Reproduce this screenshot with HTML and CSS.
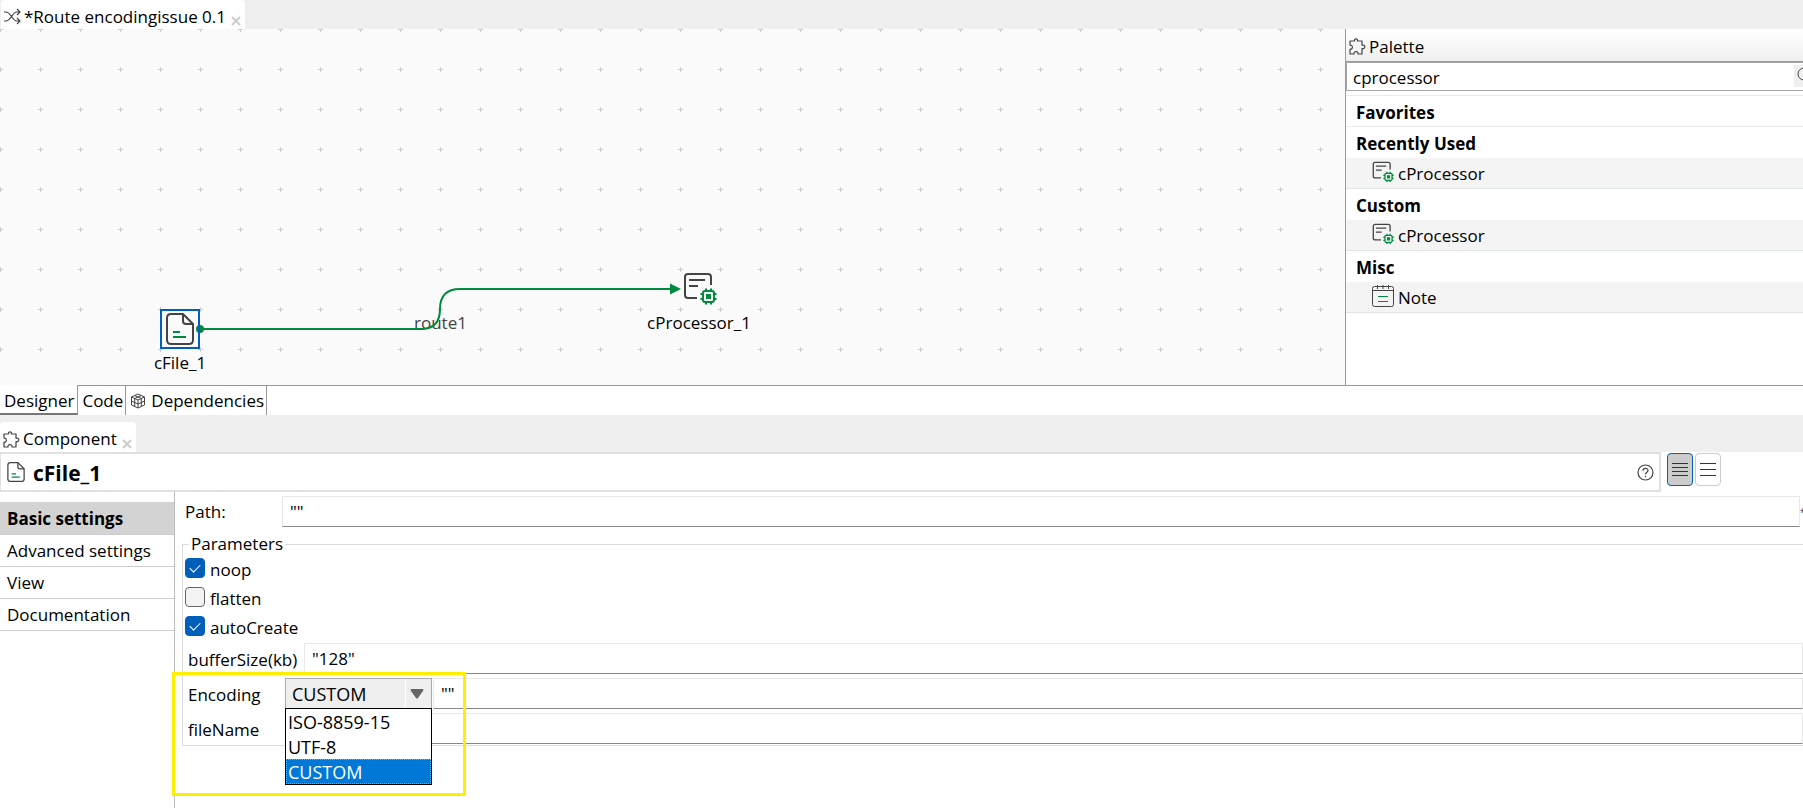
FILE: index.html
```html
<!doctype html>
<html lang="en">
<head>
<title>Route encodingissue 0.1</title>
<meta charset="UTF-8">
<meta name="viewport" content="width=device-width, initial-scale=1.0">
<link rel="stylesheet" href="styles.css">
</head>
<body>

  <!-- shared icons -->
  <svg class="defs" width="0" height="0">
    <symbol id="puzzle" viewBox="0 0 17 17">
      <path d="M1 3H5.6C4.6 .2 9.4 .2 8.4 3H13V7.2C16.8 6.2 16.8 11.3 13 10.5V16H9C9.6 12.8 4.4 12.8 5 16H1V11.2C4.2 11.8 4.2 6.6 1 7.2Z" fill="none" stroke="#444" stroke-width="1.2" stroke-linejoin="round"/>
    </symbol>
    <symbol id="processor" viewBox="0 0 34 34">
      <path d="M28 13V5Q28 2 25 2H5Q2 2 2 5V23Q2 26 5 26H14M6 8H22M6 14H15" fill="none" stroke="#444" stroke-width="2"/>
      <rect x="20" y="19" width="11" height="11" rx="2" fill="none" stroke="#008a3e" stroke-width="2"/>
      <rect x="23" y="22" width="5" height="5" fill="#008a3e"/>
      <path d="M23 19V16.500M28 19V16.500M23 32.500V30M28 32.500V30M17.500 22H20M17.500 27H20M31 22H33.500M31 27H33.500" stroke="#008a3e" stroke-width="2"/>
    </symbol>
    <symbol id="file" viewBox="0 0 28 32">
      <path d="M5 1H17L27 11V27Q27 31 23 31H5Q1 31 1 27V5Q1 1 5 1ZM17 1V8Q17 11 20 11H27" fill="none" stroke="#444" stroke-width="2"/>
      <path d="M7 19H14M7 24H20" stroke="#008a3e" stroke-width="2"/>
    </symbol>
  </svg>

  <div class="tabbar">
    <div class="tab">
      <svg class="icon" viewBox="0 0 17 17">
        <path d="M0 4H2C7 4 8 13 13 13H16M0 13H2C7 13 8 4 13 4H16M13 1L16 4L13 7M13 10L16 13L13 16" fill="none" stroke="#444" stroke-width="1.2"/>
      </svg>
      <span>*Route encodingissue 0.1</span>
      <button class="close" aria-label="Close editor"><svg viewBox="0 0 10 10"><path d="M1 1L9 9M9 1L1 9"/></svg></button>
    </div>
  </div>

  <main class="editor">
    <svg class="canvas">
      <defs>
        <pattern id="grid" x="-20" y="-20" width="40" height="40" patternUnits="userSpaceOnUse">
          <path d="M18 20.500H23M20.500 18V23" stroke="#ccc"/>
        </pattern>
      </defs>
      <rect width="100%" height="100%" fill="url(#grid)"/>

      <text class="route-label" x="414" y="300">route1</text>
      <circle cx="200" cy="300" r="4" fill="#008a3e"/>
      <path d="M200 300H421Q440 300 440 280Q440 260 460 260H672" fill="none" stroke="#008a3e" stroke-width="2"/>
      <path d="M670 254.500L681 260L670 265.500Z" fill="#008a3e"/>

      <use href="#file" x="166" y="284" width="28" height="32"/>
      <rect x="161" y="281" width="38" height="38" fill="none" stroke="#005fb8" stroke-width="2"/>
      <text class="node-label" x="180" y="340">cFile_1</text>

      <use href="#processor" x="683" y="243" width="34" height="34"/>
      <text class="node-label" x="699" y="300">cProcessor_1</text>
    </svg>

    <aside class="palette">
      <div class="palette-title">
        <svg class="icon"><use href="#puzzle"/></svg>
        <span>Palette</span>
      </div>
      <div class="search">
        <input type="text" value="cprocessor" aria-label="Search palette">
        <button aria-label="Search">
          <svg viewBox="0 0 18 18"><circle cx="8" cy="8" r="6"/><path d="M12 12L17 17"/></svg>
        </button>
      </div>
      <div class="drawers">
        <h3>Favorites</h3>
        <h3>Recently Used</h3>
        <button class="entry"><svg><use href="#processor"/></svg>cProcessor</button>
        <h3>Custom</h3>
        <button class="entry"><svg><use href="#processor"/></svg>cProcessor</button>
        <h3>Misc</h3>
        <button class="entry">
          <svg viewBox="0 0 22 22">
            <rect x=".5" y="1.500" width="21" height="20" rx="2" fill="none" stroke="#444"/>
            <path d="M1 5.500H21M5.500 0V4M11 0V4M16.500 0V4" stroke="#444"/>
            <path d="M6 11.500H16M6 16.500H16" stroke="#008a3e"/>
          </svg>Note
        </button>
      </div>
    </aside>
  </main>

  <nav class="pages">
    <button class="current">Designer</button>
    <button>Code</button>
    <button>
      <svg viewBox="0 0 16 16">
        <path d="M8 1L14.500 4V12L8 15L1.500 12V4ZM1.500 4L8 7L14.500 4M8 7V15M4.700 2.500L11.300 5.500V13.500M11.300 2.500L4.700 5.500V13.500M1.500 8L8 11L14.500 8" fill="none" stroke="#444"/>
      </svg>Dependencies
    </button>
  </nav>

  <div class="tabbar views">
    <div class="tab">
      <svg class="icon"><use href="#puzzle"/></svg>
      <span>Component</span>
      <button class="close" aria-label="Close view"><svg viewBox="0 0 10 10"><path d="M1 1L9 9M9 1L1 9"/></svg></button>
    </div>
  </div>

  <header class="component-head">
    <div class="title">
      <svg class="title-icon"><use href="#file"/></svg>
      <h2>cFile_1</h2>
      <button class="help" aria-label="Help">
        <svg viewBox="0 0 17 17">
          <circle cx="8.500" cy="8.500" r="7.500"/>
          <path d="M6 6.800C6 3.600 11 3.600 11 6.500C11 8.300 8.500 8.300 8.500 10.500M8.500 11.800V13.200"/>
        </svg>
      </button>
    </div>
    <div class="layout-buttons">
      <button class="pressed" aria-label="Compact layout"><svg viewBox="0 0 16 16"><path d="M0 1.500H16M0 5.500H16M0 9.500H16M0 13.500H16"/></svg></button>
      <button aria-label="Table layout"><svg viewBox="0 0 16 16"><path d="M0 1.500H16M0 7.500H16M0 13.500H16"/></svg></button>
    </div>
  </header>

  <section class="component">
    <nav class="sections">
      <button class="current">Basic settings</button>
      <button>Advanced settings</button>
      <button>View</button>
      <button>Documentation</button>
    </nav>

    <form class="settings">
      <div class="path">
        <label for="path">Path:</label>
        <input id="path" type="text" value='""'>
        <span class="required">*</span>
      </div>

      <fieldset>
        <legend>Parameters</legend>
        <div class="check"><input id="noop" type="checkbox" checked><label for="noop">noop</label></div>
        <div class="check"><input id="flatten" type="checkbox"><label for="flatten">flatten</label></div>
        <div class="check"><input id="autoCreate" type="checkbox" checked><label for="autoCreate">autoCreate</label></div>

        <div class="field buffer">
          <label for="bufferSize">bufferSize(kb)</label>
          <input id="bufferSize" type="text" value='"128"'>
        </div>

        <div class="field encoding">
          <label for="encoding">Encoding</label>
          <div class="combo">
            <select id="encoding">
              <option>ISO-8859-15</option>
              <option>UTF-8</option>
              <option selected>CUSTOM</option>
            </select>
            <svg class="arrow" viewBox="0 0 14 10"><path d="M1 0H13Q14 1 13 2L8 9Q7 10 6 9L1 2Q0 1 1 0Z" fill="#666"/></svg>
            <ul class="options" role="listbox" aria-label="Encoding">
              <li role="option">ISO-8859-15</li>
              <li role="option">UTF-8</li>
              <li role="option" aria-selected="true">CUSTOM</li>
            </ul>
          </div>
          <input type="text" value='""' aria-label="Custom encoding">
          <div class="highlight"></div>
        </div>

        <div class="field">
          <label for="fileName">fileName</label>
          <input id="fileName" type="text">
        </div>
      </fieldset>
    </form>
  </section>

</body>
</html>
```
FILE: styles.css
```css
* {
  box-sizing: border-box;
}

body {
  margin: 0;
  min-height: 100vh;
  display: flex;
  flex-direction: column;
  overflow: hidden;
  background: white;
  color: black;
  font: 17px/24px "Open Sans", "Noto Sans", sans-serif;
}

button, input, select {
  font: inherit;
  color: inherit;
  margin: 0;
  border: 0;
  border-radius: 0;
  outline: none;
}

button {
  padding: 0;
  background: none;
  cursor: pointer;
}

svg {
  flex: none;
}

.defs {
  position: absolute;
}

.icon {
  width: 17px;
  height: 17px;
}

/* tab strips */
.tabbar {
  display: flex;
  height: 29px;
  padding-left: 1px;
  background: #efefef;
}

.tab {
  display: flex;
  align-items: center;
  gap: 3px;
  padding: 4px 4px 0 3px;
  background: white;
  border-radius: 4px 4px 0 0;
}

.close {
  display: flex;
  align-self: flex-end;
  margin: 0 0 3px 2px;
}

.close svg {
  width: 10px;
  height: 10px;
  fill: none;
  stroke: #ccc;
  stroke-width: 2;
}

.tabbar.views {
  height: 37px;
  padding: 7px 0 0 0;
}

/* designer */
.editor {
  display: flex;
  border-bottom: 1px solid #999;
}

.canvas {
  flex: 1;
  min-width: 0;
  height: 356px;
  background: #fafafa;
}

.node-label {
  text-anchor: middle;
}

.route-label {
  fill: #444;
}

.palette {
  width: 458px;
  overflow: hidden;
  border-left: 1px solid #999;
}

.palette-title {
  display: flex;
  align-items: center;
  gap: 3px;
  height: 33px;
  padding: 3px 3px 0;
  background: linear-gradient(white, #efefef);
  border-bottom: 1px solid #999;
}

.search {
  display: flex;
  align-items: flex-start;
  margin-right: -16px;
  border: 1px solid #a5a5aa;
}

.search input {
  flex: 1;
  min-width: 0;
  height: 27px;
  padding: 1px 6px 0;
}

.search button {
  display: flex;
  width: 24px;
  height: 22px;
  margin-top: 2px;
  padding: 1px 2px;
  background: #efefef;
}

.search svg {
  width: 18px;
  height: 18px;
  fill: none;
  stroke: #444;
}

.drawers {
  margin-top: 4px;
  border-top: 1px solid #eaeaea;
}

.drawers h3 {
  margin: 0;
  height: 31px;
  padding: 5px 10px 0;
  font-size: 17px;
  line-height: 24px;
}

.drawers h3:first-child {
  border-bottom: 1px solid #eaeaea;
}

.entry {
  display: flex;
  align-items: center;
  gap: 4px;
  width: 100%;
  height: 31px;
  padding: 2px 26px 0;
  background: #f4f4f4;
  border-bottom: 1px solid #e0e6e3;
}

.entry svg {
  width: 22px;
  height: 22px;
  margin-bottom: 4px;
}

/* Designer / Code / Dependencies */
.pages {
  display: flex;
  height: 29px;
}

.pages button {
  display: flex;
  align-items: center;
  gap: 5px;
  padding: 0 2px 0 4px;
  border-right: 1px solid #999;
}

/* covers the editor's bottom line */
.pages .current {
  margin-top: -1px;
  padding: 3px 3px 0 4px;
  background: white;
  border-bottom: 2px solid #777;
}

.pages svg {
  width: 16px;
  height: 16px;
}

/* component view header */
.component-head {
  display: flex;
  gap: 6px;
}

.title {
  display: flex;
  align-items: center;
  width: 1661px;
  height: 40px;
  padding: 0 5px 0 6px;
  border: 2px solid #e0e0e0;
  border-left-width: 1px;
}

.title-icon {
  width: 18px;
  height: 20px;
}

.title h2 {
  flex: 1;
  margin: 0 8px;
  padding-top: 2px;
  font-size: 21px;
  line-height: 24px;
}

.help {
  display: flex;
}

.help svg {
  width: 17px;
  height: 17px;
  fill: none;
  stroke: #444;
  stroke-width: 1.2;
}

.layout-buttons {
  display: flex;
  gap: 2px;
  padding-top: 1px;
}

.layout-buttons button {
  display: flex;
  align-items: center;
  justify-content: center;
  width: 26px;
  height: 33px;
  border: 1px solid #ccc;
  border-radius: 4px;
}

.layout-buttons .pressed {
  background: #ccc;
  border-color: #005fb8;
}

.layout-buttons svg {
  width: 16px;
  height: 16px;
  stroke: #333;
}

/* settings */
.component {
  flex: 1;
  display: flex;
}

.sections {
  width: 175px;
  padding-top: 10px;
  border-right: 1px solid #bbb;
}

.sections button {
  display: block;
  width: 100%;
  height: 32px;
  padding: 0 7px;
  text-align: left;
  border-bottom: 1px solid #ccc;
}

.sections .current {
  height: 33px;
  padding-top: 2px;
  background: #d3d3d3;
  font-weight: bold;
}

.settings {
  flex: 1;
  min-width: 0;
  padding: 4px 0 0 7px;
}

.settings input[type=text] {
  flex: 1;
  min-width: 0;
  height: 31px;
  padding: 0 7px;
  background: white;
  border: 1px solid #e8e8e8;
  border-bottom-color: #888;
}

.path {
  display: flex;
  align-items: center;
}

.path label {
  width: 100px;
  padding: 1px 0 0 3px;
}

.required {
  width: 3px;
  overflow: hidden;
  color: #336;
  font-size: 10px;
  line-height: 32px;
  align-self: flex-start;
  height: 20px;
}

fieldset {
  margin: 5px 0 0;
  padding: 0 0 1px;
  min-width: 0;
  border: 1px solid #dcdcdc;
  border-right: 0;
}

legend {
  margin-left: 6px;
  padding: 0 2px;
}

.check {
  display: flex;
  height: 29px;
  padding: 2px 0 0 2px;
  gap: 5px;
}

.check input {
  display: grid;
  place-items: center;
  width: 20px;
  height: 20px;
  appearance: none;
  background: #f3f3f3;
  border: 1px solid #666;
  border-radius: 4px;
}

.check input:checked {
  background: #005fb8;
  border-color: #005fb8;
}

/* tick, a rotated corner */
.check input:checked::before {
  content: '';
  width: 5px;
  height: 9px;
  margin-bottom: 3px;
  border: solid white;
  border-width: 0 1px 1px 0;
  transform: rotate(45deg);
}

.field {
  position: relative;
  display: flex;
  align-items: center;
  margin-bottom: 4px;
}

.field:last-child {
  margin-bottom: 0;
}

.field label {
  flex: none;
  width: 102px;
  padding: 3px 0 0 5px;
}

.field.buffer label {
  width: 121px;
}

.combo {
  position: relative;
  flex: none;
  width: 147px;
  font-size: 18px;
}

.combo + input {
  margin-left: 1px;
}

.combo select {
  display: block;
  width: 100%;
  height: 31px;
  padding: 0 6px;
  appearance: none;
  background: linear-gradient(to left, #efefef 25px, white 25px, white 26px, #efefef 26px);
  border: 1px solid #aaa;
}

.arrow {
  position: absolute;
  right: 8px;
  top: 11px;
  width: 14px;
  height: 10px;
  pointer-events: none;
}

.options {
  position: absolute;
  z-index: 2;
  top: 30px;
  left: 0;
  width: 100%;
  margin: 0;
  padding: 0;
  list-style: none;
  background: white;
  border: 1px solid black;
}

.options li {
  height: 25px;
  padding-left: 2px;
  line-height: 27px;
}

.options [aria-selected=true] {
  background: #0078d7;
  color: white;
  outline: 1px dotted #ff8728;
  outline-offset: -1px;
}

.highlight {
  position: absolute;
  z-index: 1;
  top: -6px;
  left: -11px;
  width: 294px;
  height: 124px;
  border: 3px solid #ffee00;
  pointer-events: none;
}
```
